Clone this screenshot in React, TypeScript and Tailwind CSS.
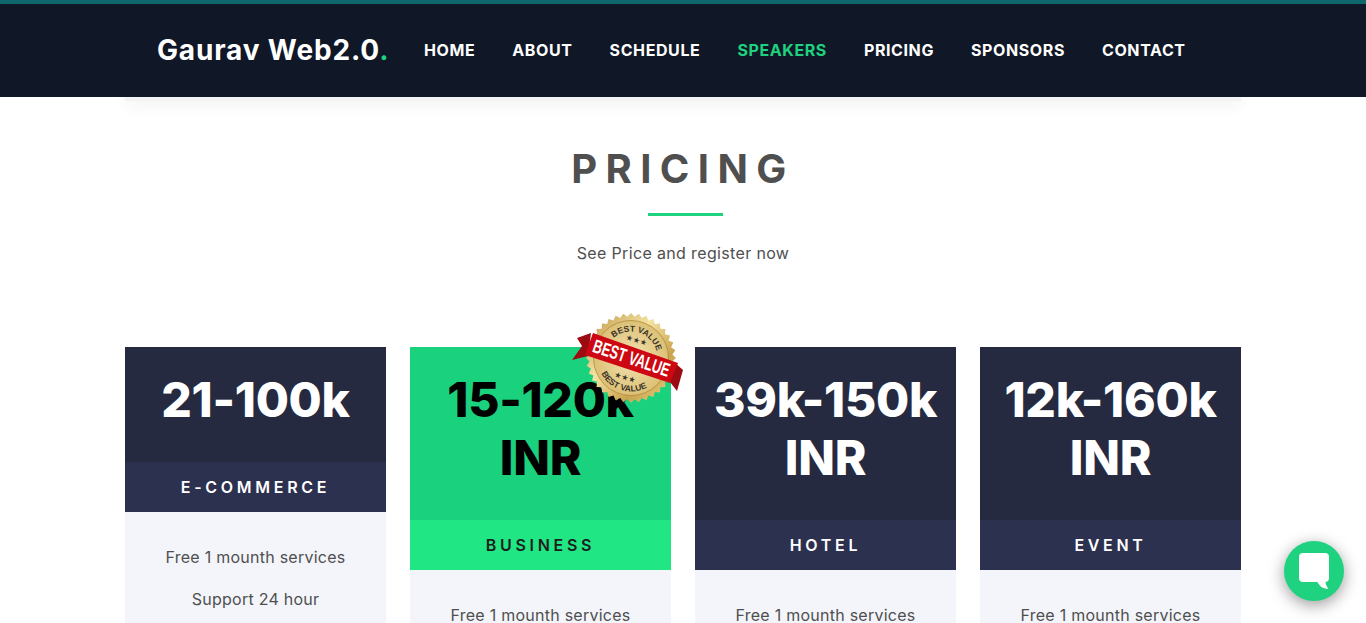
const navLinks = ["HOME", "ABOUT", "SCHEDULE", "SPEAKERS", "PRICING", "SPONSORS", "CONTACT"];

const plans = [
  { price: "21-100k", inr: false, name: "E-COMMERCE", featured: false },
  { price: "15-120k", inr: true, name: "BUSINESS", featured: true },
  { price: "39k-150k", inr: true, name: "HOTEL", featured: false },
  { price: "12k-160k", inr: true, name: "EVENT", featured: false },
];

// zigzag edge of the gold seal
function sealPoints(cx: number, cy: number, outer: number, inner: number, teeth: number) {
  const pts: string[] = [];
  for (let i = 0; i < teeth * 2; i++) {
    const r = i % 2 === 0 ? outer : inner;
    const a = (Math.PI * i) / teeth;
    pts.push(`${(cx + r * Math.cos(a)).toFixed(2)},${(cy + r * Math.sin(a)).toFixed(2)}`);
  }
  return pts.join(" ");
}

function BestValue() {
  return (
    <svg viewBox="0 0 114 96" className="absolute left-[160px] top-[-35px] h-[96px] w-[114px]">
      <defs>
        <linearGradient id="gold" x1="0" y1="0" x2="1" y2="1">
          <stop offset="0" stopColor="#b98f3c" />
          <stop offset="0.4" stopColor="#f5e3a3" />
          <stop offset="0.7" stopColor="#c9a44f" />
          <stop offset="1" stopColor="#f0d98f" />
        </linearGradient>
        <radialGradient id="face">
          <stop offset="0" stopColor="#f3e4b4" />
          <stop offset="1" stopColor="#dcc075" />
        </radialGradient>
        <path id="arcTop" d="M 34.5 46 A 26.5 26.5 0 0 1 87.5 46" />
        <path id="arcBottom" d="M 27.5 46 A 33.5 33.5 0 0 0 94.5 46" />
      </defs>
      <polygon points={sealPoints(61, 46, 45, 41.5, 36)} fill="url(#gold)" />
      <circle cx="61" cy="46" r="37.5" fill="url(#face)" stroke="#a9842f" strokeWidth="0.7" />
      <g transform="rotate(17 61 46)" fontFamily="Liberation Sans, sans-serif" fontWeight="700" fontSize="8.5" fill="#39332a">
        <text>
          <textPath href="#arcTop" startOffset="50%" textAnchor="middle">BEST VALUE</textPath>
        </text>
        <text>
          <textPath href="#arcBottom" startOffset="50%" textAnchor="middle">BEST VALUE</textPath>
        </text>
      </g>
      <text x="61" y="30" textAnchor="middle" fontSize="7" fill="#39332a" transform="rotate(17 61 46)">★★★</text>
      <text x="61" y="69" textAnchor="middle" fontSize="7" fill="#39332a" transform="rotate(17 61 46)">★★★</text>
      <polygon points="21,21 7,26 12,34 2,48 18,44" fill="#9c0a12" />
      <polygon points="104,50 113,58 107,79 100,70" fill="#9c0a12" />
      <polygon points="23,21 108,51 100,71 15,43" fill="#cd0812" />
      <text
        x="61.5"
        y="52.5"
        textAnchor="middle"
        fontFamily="Liberation Sans, sans-serif"
        fontWeight="700"
        fontSize="19"
        fill="#fff"
        textLength="80"
        lengthAdjust="spacingAndGlyphs"
        transform="rotate(18.5 61.5 46)"
      >
        BEST VALUE
      </text>
    </svg>
  );
}

export default function App() {
  return (
    <div className="relative h-[623px] overflow-hidden bg-white font-['Inter',sans-serif] text-[#4f4f4f]">
      <header className="relative z-10 h-[97px] border-t-[4px] border-[#0f666b] bg-[#101726]">
        <div className="flex h-[91px] items-center pl-[157px]">
          <a className="w-[267px] whitespace-nowrap text-[28px] font-bold tracking-[0.85px] text-white">
            Gaurav Web2.0<span className="text-[#1ed27f]">.</span>
          </a>
          <nav className="flex gap-[37px]">
            {navLinks.map((l) => (
              <a
                key={l}
                className={`text-[16px] font-bold tracking-[0.6px] ${l === "SPEAKERS" ? "text-[#1ed27f]" : "text-white"}`}
              >
                {l}
              </a>
            ))}
          </nav>
        </div>
      </header>

      <div className="mx-auto h-[4px] w-[1116px] bg-[#f3f3f3] shadow-[0_2px_16px_rgba(0,0,0,0.14)]" />

      <section className="mx-auto w-[1116px] pt-[44px]">
        <h2 className="text-center text-[40px] font-bold leading-[48px] tracking-[8.4px] text-[#4f4f4f]">PRICING</h2>
        <div className="ml-[523px] mt-[20px] h-[3px] w-[75px] bg-[#1ed27f]" />
        <p className="mt-[25px] text-center text-[16px] leading-[24px] tracking-[0.35px]">See Price and register now</p>

        <div className="mt-[82px] grid grid-cols-4 gap-[24px]">
          {plans.map((p) => (
            <div key={p.name} className="relative bg-[#f3f5fa]">
              <div
                className={`px-1 pb-[33px] pt-[24px] text-center text-[48px] font-extrabold leading-[58px] tracking-[-0.3px] ${
                  p.featured ? "bg-[#1ad27d] text-black" : "bg-[#252a41] text-white"
                }`}
              >
                {p.price}
                {p.inr && (
                  <>
                    <br />
                    INR
                  </>
                )}
              </div>
              <div
                className={`h-[50px] text-center text-[16px] font-semibold leading-[50px] tracking-[3.7px] ${
                  p.featured ? "bg-[#20e684] text-[#1d1d1d]" : "bg-[#2d3150] text-white"
                }`}
              >
                {p.name}
              </div>
              <ul className="pt-[24px] text-center text-[16px] leading-[42px] tracking-[0.25px]">
                <li>Free 1 mounth services</li>
                <li>Support 24 hour</li>
              </ul>
              {p.featured && <BestValue />}
            </div>
          ))}
        </div>
      </section>

      <button className="absolute left-[1284px] top-[541px] h-[60px] w-[60px] rounded-full bg-[#1ed27f] shadow-[0_4px_16px_rgba(0,0,0,0.4)]">
        <svg viewBox="0 0 60 60" className="h-[60px] w-[60px]">
          <rect x="15" y="12" width="30" height="29" rx="4" fill="#fff" />
          <path d="M33 40 C35 45 39 48 44.5 48 C42.5 45.5 41.5 43 41.5 40 Z" fill="#fff" />
        </svg>
      </button>
    </div>
  );
}
